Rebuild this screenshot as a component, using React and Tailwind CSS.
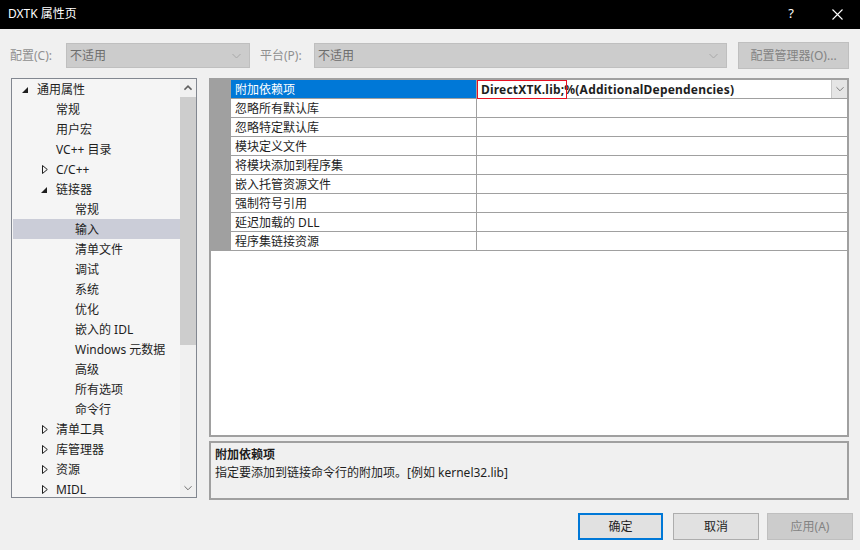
import React from "react";

const tree = [
  { label: "通用属性", level: 0, arrow: "open" },
  { label: "常规", level: 1 },
  { label: "用户宏", level: 1 },
  { label: "VC++ 目录", level: 1 },
  { label: "C/C++", level: 1, arrow: "closed" },
  { label: "链接器", level: 1, arrow: "open" },
  { label: "常规", level: 2 },
  { label: "输入", level: 2, selected: true },
  { label: "清单文件", level: 2 },
  { label: "调试", level: 2 },
  { label: "系统", level: 2 },
  { label: "优化", level: 2 },
  { label: "嵌入的 IDL", level: 2 },
  { label: "Windows 元数据", level: 2 },
  { label: "高级", level: 2 },
  { label: "所有选项", level: 2 },
  { label: "命令行", level: 2 },
  { label: "清单工具", level: 1, arrow: "closed" },
  { label: "库管理器", level: 1, arrow: "closed" },
  { label: "资源", level: 1, arrow: "closed" },
  { label: "MIDL", level: 1, arrow: "closed" },
];

const props = [
  "附加依赖项",
  "忽略所有默认库",
  "忽略特定默认库",
  "模块定义文件",
  "将模块添加到程序集",
  "嵌入托管资源文件",
  "强制符号引用",
  "延迟加载的 DLL",
  "程序集链接资源",
];

function Chevron({ up = false, color = "#9a9a9a", w = 9 }) {
  return (
    <svg width={w} height="6" viewBox="0 0 9 6" className="shrink-0">
      <path
        d={up ? "M0.5 5 L4.5 1 L8.5 5" : "M0.5 1 L4.5 5 L8.5 1"}
        fill="none"
        stroke={color}
        strokeWidth={up ? 1.8 : 1}
      />
    </svg>
  );
}

function Arrow({ kind }) {
  if (kind === "open") {
    return (
      <svg width="6" height="6" viewBox="0 0 6 6" className="mt-[2px]">
        <path d="M6 0 L6 6 L0 6 Z" fill="#1e1e1e" />
      </svg>
    );
  }
  return (
    <svg width="6" height="9" viewBox="0 0 6 9" className="ml-[1px]">
      <path d="M0.5 0.5 L5.3 4.5 L0.5 8.5 Z" fill="none" stroke="#1e1e1e" strokeWidth="1" />
    </svg>
  );
}

function Dropdown({ width, text }) {
  return (
    <div
      className={`${width} h-[25px] bg-[#cccccc] border border-[#bfbfbf] flex items-center justify-between pl-[3px] pr-[8px] text-[#6d6d6d]`}
    >
      <span>{text}</span>
      <Chevron color="#a8a8a8" />
    </div>
  );
}

export default function App() {
  return (
    <div className="w-[860px] h-[550px] bg-[#f0f0f0] flex flex-col text-[12px] leading-none text-[#1e1e1e] font-['Noto_Sans','Noto_Sans_CJK_SC',sans-serif] overflow-hidden select-none">
      {/* title bar */}
      <div className="h-[29px] bg-black text-white flex items-center pl-[8px]">
        <span className="mt-[-2px]">DXTK 属性页</span>
        <div className="ml-auto flex items-center">
          <span className="w-[46px] text-center text-[13px] mt-[-2px]">?</span>
          <div className="w-[46px] flex justify-center">
            <svg width="11" height="11" viewBox="0 0 11 11">
              <path d="M0.5 0.5 L10.5 10.5 M10.5 0.5 L0.5 10.5" stroke="#fff" strokeWidth="1.1" />
            </svg>
          </div>
        </div>
      </div>

      {/* configuration row */}
      <div className="mt-[13px] h-[27px] flex items-center pl-[10px]">
        <span className="w-[56px] text-[#8f8f8f]">配置(C):</span>
        <Dropdown width="w-[184px]" text="不适用" />
        <span className="ml-[10px] w-[54px] text-[#8f8f8f]">平台(P):</span>
        <Dropdown width="w-[413px]" text="不适用" />
        <div className="ml-[11px] w-[111px] h-[27px] bg-[#cccccc] border border-[#bfbfbf] flex items-center justify-center text-[#838383]">
          配置管理器(O)...
        </div>
      </div>

      {/* main */}
      <div className="mt-[9px] flex pl-[11px]">
        {/* tree */}
        <div className="w-[186px] h-[420px] border border-[#828790] bg-[#f5f5f5] flex overflow-hidden">
          <div className="flex-1 flex flex-col pl-[1px] pt-0">
            {tree.map((t, i) => (
              <div
                key={i}
                className={`h-[20px] shrink-0 flex items-center pt-[2px] ${t.selected ? "bg-[#cbcdd8]" : ""}`}
                style={{ paddingLeft: 9 + t.level * 19 }}
              >
                <div className="w-[15px] flex items-center mt-[-2px]">{t.arrow && <Arrow kind={t.arrow} />}</div>
                <span className="whitespace-nowrap">{t.label}</span>
              </div>
            ))}
          </div>
          <div className="w-[16px] bg-[#f0f0f0] flex flex-col">
            <div className="h-[18px] flex items-center justify-center">
              <Chevron up color="#606060" w={8} />
            </div>
            <div className="h-[248px] bg-[#cdcdcd]" />
            <div className="flex-1" />
            <div className="h-[18px] flex items-center justify-center">
              <Chevron color="#606060" w={8} />
            </div>
          </div>
        </div>

        {/* right column */}
        <div className="ml-[12px] w-[640px] flex flex-col">
          <div className="h-[359px] border-2 border-[#a0a0a0] bg-white flex flex-col">
            {props.map((p, i) => (
              <div key={i} className="h-[19px] shrink-0 flex">
                <div className="w-[20px] bg-[#a0a0a0]" />
                <div
                  className={`w-[246px] flex items-center pl-[4px] pt-[2px] border-r border-b border-[#a0a0a0] ${
                    i === 0 ? "bg-[#0078d7] text-white" : ""
                  }`}
                >
                  {p}
                </div>
                <div className="flex-1 flex items-center border-b border-[#a0a0a0] relative">
                  {i === 0 && (
                    <>
                      <span className="pl-[4px] pt-[2px] font-bold whitespace-nowrap tracking-[0.2px]">
                        DirectXTK.lib;%(AdditionalDependencies)
                      </span>
                      <div className="absolute left-0 top-0 w-[90px] h-[19px] border border-[#e81123]" />
                      <div className="ml-auto w-[16px] h-[18px] bg-[#e5e5e5] border-l border-[#c8c8c8] flex items-center justify-center">
                        <Chevron color="#707070" w={8} />
                      </div>
                    </>
                  )}
                </div>
              </div>
            ))}
          </div>
          <div className="mt-[4px] h-[59px] border-2 border-[#a0a0a0] flex flex-col pl-[4px] pt-[6px]">
            <span className="font-bold">附加依赖项</span>
            <span className="mt-[6px]">指定要添加到链接命令行的附加项。[例如 kernel32.lib]</span>
          </div>
        </div>
      </div>

      {/* buttons */}
      <div className="mt-[13px] flex pl-[578px] gap-[10px]">
        <div className="w-[85px] h-[27px] border-2 border-[#0078d7] bg-[#e1e1e1] flex items-center justify-center">确定</div>
        <div className="w-[86px] h-[27px] border border-[#adadad] bg-[#e1e1e1] flex items-center justify-center">取消</div>
        <div className="w-[86px] h-[27px] border border-[#bfbfbf] bg-[#cccccc] flex items-center justify-center text-[#838383] ml-[-2px]">
          应用(A)
        </div>
      </div>
    </div>
  );
}
